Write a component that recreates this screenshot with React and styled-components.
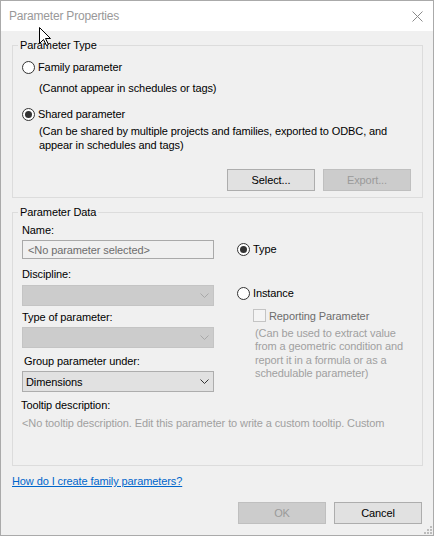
import React from 'react';
import styled, { createGlobalStyle } from 'styled-components';

const Global = createGlobalStyle`
  html, body { margin: 0; padding: 0; background: #f0f0f0; }
  * { box-sizing: border-box; }
  body {
    font-family: "Liberation Sans", Arial, sans-serif;
    font-size: 11px;
    letter-spacing: -0.1px;
    color: #000;
  }
`;

const Window = styled.div`
  position: relative;
  width: 434px;
  height: 536px;
  border: 1px solid #aaaaaa;
  background: #f0f0f0;
  display: flex;
  flex-direction: column;
  overflow: hidden;
`;

const TitleBar = styled.div`
  height: 30px;
  flex: none;
  background: #fff;
  display: flex;
  align-items: center;
  justify-content: space-between;
  padding: 0 10px 0 8px;
  font-size: 12px;
  letter-spacing: -0.2px;
  color: #999999;
`;

const Body = styled.div`
  flex: 1;
  display: flex;
  flex-direction: column;
  padding: 14px 10px 0 11px;
`;

const GroupBox = styled.div`
  position: relative;
  border: 1px solid #dcdcdc;
  padding: ${(p) => p.$pad};
  margin-top: ${(p) => p.$mt || 0}px;
  display: flex;
  flex-direction: column;
`;

const Legend = styled.span`
  position: absolute;
  top: -8px;
  left: 5px;
  padding: 0 2px;
  background: #f0f0f0;
  line-height: 15px;
`;

const RadioRow = styled.label`
  display: flex;
  align-items: center;
  gap: 3px;
  height: 16px;
  margin-top: ${(p) => p.$mt || 0}px;
  margin-left: ${(p) => p.$ml || 0}px;
`;

const RadioCircle = styled.span`
  width: 13px;
  height: 13px;
  flex: none;
  border-radius: 50%;
  border: 1px solid #333;
  background: #fff;
  display: flex;
  align-items: center;
  justify-content: center;
  &::after {
    content: '';
    width: 7px;
    height: 7px;
    border-radius: 50%;
    background: ${(p) => (p.$checked ? '#333' : 'transparent')};
  }
`;

const Note = styled.div`
  margin-top: ${(p) => p.$mt || 0}px;
  padding-left: ${(p) => p.$pl || 0}px;
  line-height: ${(p) => p.$lh || 15}px;
  color: ${(p) => p.$color || '#000'};
`;

const ButtonRow = styled.div`
  display: flex;
  justify-content: flex-end;
  gap: 8px;
  margin-top: ${(p) => p.$mt || 0}px;
  margin-right: ${(p) => p.$mr || 0}px;
`;

const Button = styled.button`
  width: 88px;
  height: 22px;
  margin: 0;
  padding: 0;
  font: inherit;
  font-size: 11px;
  letter-spacing: inherit;
  background: ${(p) => (p.disabled ? '#cccccc' : '#e1e1e1')};
  border: 1px solid ${(p) => (p.disabled ? '#bfbfbf' : '#adadad')};
  color: ${(p) => (p.disabled ? '#9a9a9a' : '#000')};
`;

const DataGrid = styled.div`
  display: flex;
  gap: 23px;
`;

const LeftCol = styled.div`
  width: 192px;
  flex: none;
  display: flex;
  flex-direction: column;
`;

const RightCol = styled.div`
  flex: 1;
  display: flex;
  flex-direction: column;
  padding-top: 18px;
`;

const Label = styled.div`
  line-height: 15px;
  margin-top: ${(p) => p.$mt || 0}px;
  margin-left: ${(p) => p.$ml || 0}px;
`;

const TextBox = styled.div`
  height: 19px;
  margin-top: ${(p) => p.$mt || 0}px;
  border: 1px solid #a9a9a9;
  background: #f0f0f0;
  color: #6d6d6d;
  padding-left: 5px;
  display: flex;
  align-items: center;
`;

const Combo = styled.div`
  height: 21px;
  margin-top: ${(p) => p.$mt || 0}px;
  border: 1px solid ${(p) => (p.$disabled ? '#c4c4c4' : '#adadad')};
  background: ${(p) => (p.$disabled ? '#cccccc' : '#e1e1e1')};
  display: flex;
  align-items: center;
  justify-content: space-between;
  padding: 0 4px 0 3px;
  color: #000;
`;

const CheckRow = styled.div`
  display: flex;
  align-items: center;
  gap: 3px;
  height: 13px;
  margin-top: 8px;
  padding-left: 16px;
  color: #6d6d6d;
`;

const CheckBox = styled.span`
  width: 13px;
  height: 13px;
  flex: none;
  border: 1px solid #c4c4c4;
  background: #f4f4f4;
`;

const TooltipText = styled.div`
  margin-top: 3px;
  line-height: 15px;
  color: #a0a0a0;
  white-space: nowrap;
  overflow: hidden;
  width: 370px;
`;

const HelpLink = styled.a`
  align-self: flex-start;
  margin-top: 8px;
  line-height: 15px;
  color: #0066cc;
  text-decoration: underline;
  cursor: pointer;
`;

const Grip = styled.svg`
  position: absolute;
  right: 1px;
  bottom: 1px;
`;

const Cursor = styled.svg`
  position: absolute;
  left: 38px;
  top: 26px;
`;

const Chevron = ({ color }) => (
  <svg width="9" height="5" viewBox="0 0 9 5">
    <path d="M0.5 0.5 L4.5 4.5 L8.5 0.5" fill="none" stroke={color} strokeWidth="1" />
  </svg>
);

export default function App() {
  return (
    <>
      <Global />
      <Window>
        <TitleBar>
          <span>Parameter Properties</span>
          <svg width="11" height="11" viewBox="0 0 11 11">
            <path d="M0.5 0.5 L10.5 10.5 M10.5 0.5 L0.5 10.5" stroke="#8a8a8a" strokeWidth="1" />
          </svg>
        </TitleBar>
        <Body>
          <GroupBox $pad="13px 11px 6px 9px">
            <Legend>Parameter Type</Legend>
            <RadioRow>
              <RadioCircle />
              Family parameter
            </RadioRow>
            <Note $mt={6} $pl={17}>(Cannot appear in schedules or tags)</Note>
            <RadioRow $mt={10}>
              <RadioCircle $checked />
              Shared parameter
            </RadioRow>
            <Note $mt={2} $pl={17} $lh={14}>
              (Can be shared by multiple projects and families, exported to ODBC, and
              <br />
              appear in schedules and tags)
            </Note>
            <ButtonRow $mt={17}>
              <Button>Select...</Button>
              <Button disabled>Export...</Button>
            </ButtonRow>
          </GroupBox>

          <GroupBox $mt={14} $pad="10px 11px 34px 9px">
            <Legend>Parameter Data</Legend>
            <DataGrid>
              <LeftCol>
                <Label>Name:</Label>
                <TextBox $mt={2}>&lt;No parameter selected&gt;</TextBox>
                <Label $mt={8}>Discipline:</Label>
                <Combo $mt={3} $disabled>
                  <span />
                  <Chevron color="#a8a8a8" />
                </Combo>
                <Label $mt={4}>Type of parameter:</Label>
                <Combo $mt={2} $disabled>
                  <span />
                  <Chevron color="#a8a8a8" />
                </Combo>
                <Label $mt={6} $ml={2}>Group parameter under:</Label>
                <Combo $mt={2}>
                  <span>Dimensions</span>
                  <Chevron color="#333" />
                </Combo>
              </LeftCol>
              <RightCol>
                <RadioRow>
                  <RadioCircle $checked />
                  Type
                </RadioRow>
                <RadioRow $mt={28}>
                  <RadioCircle />
                  Instance
                </RadioRow>
                <CheckRow>
                  <CheckBox />
                  Reporting Parameter
                </CheckRow>
                <Note $mt={5} $pl={18} $lh={13.3} $color="#a0a0a0">
                  (Can be used to extract value
                  <br />
                  from a geometric condition and
                  <br />
                  report it in a formula or as a
                  <br />
                  schedulable parameter)
                </Note>
              </RightCol>
            </DataGrid>
            <Label $mt={6} $ml={-1}>Tooltip description:</Label>
            <TooltipText>
              &lt;No tooltip description. Edit this parameter to write a custom tooltip. Custom
            </TooltipText>
          </GroupBox>

          <HelpLink>How do I create family parameters?</HelpLink>
          <ButtonRow $mt={13} $mr={1}>
            <Button disabled>OK</Button>
            <Button>Cancel</Button>
          </ButtonRow>
        </Body>
        <Grip width="10" height="10" viewBox="0 0 10 10">
          <rect x="8" y="2" width="2" height="2" fill="#bcbcbc" />
          <rect x="5" y="5" width="2" height="2" fill="#bcbcbc" />
          <rect x="8" y="5" width="2" height="2" fill="#bcbcbc" />
          <rect x="2" y="8" width="2" height="2" fill="#bcbcbc" />
          <rect x="5" y="8" width="2" height="2" fill="#bcbcbc" />
          <rect x="8" y="8" width="2" height="2" fill="#bcbcbc" />
        </Grip>
        <Cursor width="13" height="20" viewBox="0 0 13 20">
          <path
            d="M0.5 0.5 L0.5 16.5 L4.5 12.5 L7.5 18.5 L9.5 17.5 L6.5 11.5 L11.5 11.5 Z"
            fill="#fff"
            stroke="#000"
            strokeWidth="1"
            strokeLinejoin="miter"
          />
        </Cursor>
      </Window>
    </>
  );
}
